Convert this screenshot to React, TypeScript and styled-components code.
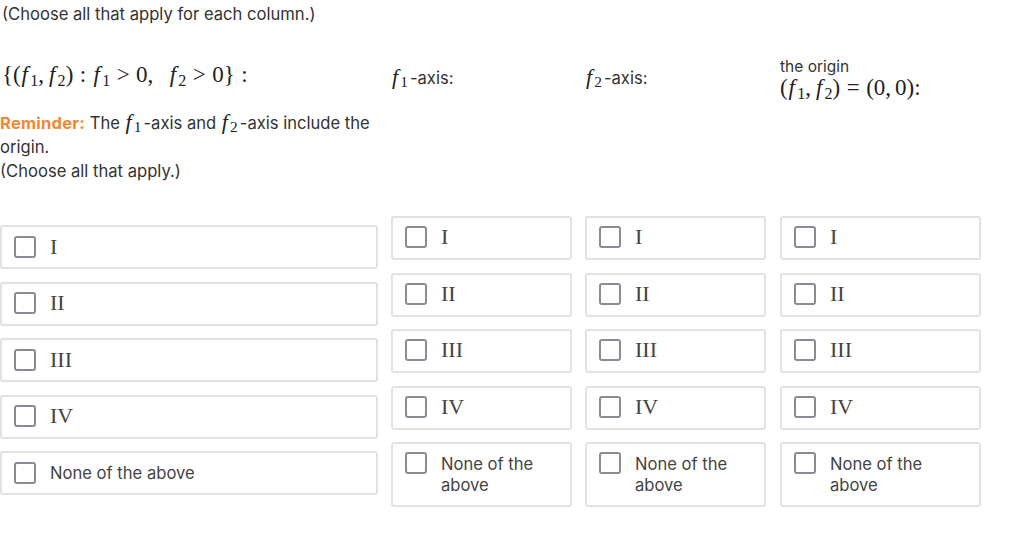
import React from "react"
import styled, { createGlobalStyle } from "styled-components"

const GlobalStyle = createGlobalStyle`
  html, body {
    margin: 0;
    padding: 0;
    background: #fff;
  }
  body {
    font-family: Inter, "Liberation Sans", sans-serif;
    font-size: 16.6px;
    color: #333;
  }
`

const Page = styled.div`
  width: 1024px;
  height: 549px;
  padding-top: 2px;
  box-sizing: border-box;
  overflow: hidden;
`

const Instruction = styled.p`
  margin: 0 0 0 2px;
  line-height: 24px;
`

const Columns = styled.div`
  display: flex;
  align-items: flex-start;
  margin-top: 28px;
`

const Column = styled.div<{ $width: number; $gap: number }>`
  width: ${(p) => p.$width}px;
  margin-right: ${(p) => p.$gap}px;
  flex-shrink: 0;
  display: flex;
  flex-direction: column;
`

const Header = styled.div`
  height: 48px;
  display: flex;
  flex-direction: column;
  justify-content: center;
  line-height: 23px;
`

const SmallLine = styled.div`
  font-size: 15.5px;
  line-height: 22px;
`

const Math = styled.span<{ $inline?: boolean }>`
  font-family: "Liberation Serif", "DejaVu Serif", serif;
  font-size: ${(p) => (p.$inline ? 22 : 23)}px;
  line-height: 0;
  color: #222;
  white-space: nowrap;
  margin-right: ${(p) => (p.$inline ? "2px" : "0")};
`

const Var = styled.i`
  font-style: italic;
  padding: 0 0.1em 0 0.04em;
`

const Sub = styled.sub`
  font-style: normal;
  font-size: 0.7em;
  vertical-align: -0.22em;
  line-height: 0;
`

const Rel = styled.span`
  margin: 0 0.28em;
`

const Comma = styled.span`
  margin-right: 0.17em;
`

const Reminder = styled.div`
  margin-top: 9px;
  line-height: 24px;
`

const Accent = styled.b`
  color: #f0882e;
  font-weight: 700;
  letter-spacing: 0.2px;
`

const Options = styled.div<{ $top: number }>`
  display: flex;
  flex-direction: column;
  gap: 12.5px;
  margin-top: ${(p) => p.$top}px;
`

const Option = styled.label<{ $center?: boolean }>`
  display: flex;
  align-items: ${(p) => (p.$center ? "center" : "flex-start")};
  gap: 14px;
  min-height: 44px;
  box-sizing: border-box;
  border: 2px solid #e2e2e2;
  border-radius: 3px;
  padding: 8px 12px 9px 12px;
  background: #fff;
`

const Box = styled.span`
  width: 22px;
  height: 22px;
  box-sizing: border-box;
  border: 2px solid #8c8a96;
  border-radius: 3px;
  flex-shrink: 0;
`

const Numeral = styled.span`
  font-family: "Liberation Serif", "DejaVu Serif", serif;
  font-size: 22px;
  line-height: 22px;
  color: #444;
`

const Plain = styled.span`
  font-size: 16.6px;
  line-height: 21px;
  margin-top: 1.5px;
  color: #444;
`

const F = ({ n }: { n: number }) => (
  <>
    <Var>f</Var>
    <Sub>{n}</Sub>
  </>
)

const numerals = ["I", "II", "III", "IV"]

const OptionList = ({ top, center }: { top: number; center?: boolean }) => (
  <Options $top={top}>
    {numerals.map((n) => (
      <Option key={n} $center={center}>
        <Box />
        <Numeral>{n}</Numeral>
      </Option>
    ))}
    <Option $center={center}>
      <Box />
      <Plain>None of the above</Plain>
    </Option>
  </Options>
)

export default function App() {
  return (
    <Page>
      <GlobalStyle />
      <Instruction>(Choose all that apply for each column.)</Instruction>
      <Columns>
        <Column $width={378} $gap={13}>
          <Header>
            <Math style={{ marginLeft: 2 }}>
              {"{("}
              <F n={1} />
              <Comma>,</Comma>
              <F n={2} />
              )<Rel>:</Rel>
              <F n={1} />
              <Rel>&gt;</Rel>0<Comma>,</Comma>&ensp;
              <F n={2} />
              <Rel>&gt;</Rel>0{"}"}
              <Rel>:</Rel>
            </Math>
          </Header>
          <Reminder>
            <Accent>Reminder:</Accent> The{" "}
            <Math $inline>
              <F n={1} />
            </Math>
            -axis and{" "}
            <Math $inline>
              <F n={2} />
            </Math>
            -axis include the origin.
            <br />
            (Choose all that apply.)
          </Reminder>
          <OptionList top={42} center />
        </Column>
        <Column $width={181} $gap={13}>
          <Header>
            <div>
              <Math $inline>
                <F n={1} />
              </Math>
              -axis:
            </div>
          </Header>
          <OptionList top={114} />
        </Column>
        <Column $width={181} $gap={14}>
          <Header>
            <div>
              <Math $inline>
                <F n={2} />
              </Math>
              -axis:
            </div>
          </Header>
          <OptionList top={114} />
        </Column>
        <Column $width={201} $gap={0}>
          <Header>
            <SmallLine>the origin</SmallLine>
            <div>
              <Math>
                (<F n={1} />
                <Comma>,</Comma>
                <F n={2} />)<Rel>=</Rel>(0<Comma>,</Comma>0):
              </Math>
            </div>
          </Header>
          <OptionList top={114} />
        </Column>
      </Columns>
    </Page>
  )
}
